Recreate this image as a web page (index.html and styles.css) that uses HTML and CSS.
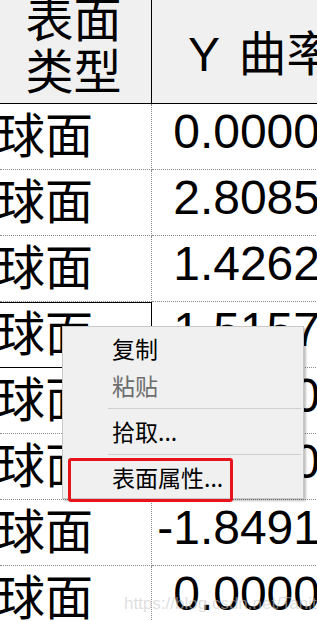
FILE: index.html
```html
<!DOCTYPE html>
<html lang="zh-CN">
<head>
  <meta charset="UTF-8">
  <title>表面数据</title>
  <link rel="stylesheet" href="styles.css">
</head>
<body>
  <div class="sheet">
    <div class="head name-head"><span>表面<br>类型</span></div>
    <div class="head val-head">Y 曲率</div>

    <div class="cell name">球面</div><div class="cell val">0.0000</div>
    <div class="cell name">球面</div><div class="cell val">2.8085</div>
    <div class="cell name">球面</div><div class="cell val">1.4262</div>
    <div class="cell name selected">球面</div><div class="cell val">1.5157</div>
    <div class="cell name">球面</div><div class="cell val">0.0000</div>
    <div class="cell name">球面</div><div class="cell val">0.0000</div>
    <div class="cell name">球面</div><div class="cell val">-1.8491</div>
    <div class="cell name">球面</div><div class="cell val">0.0000</div>
  </div>

  <!-- 右键菜单 -->
  <div class="menu">
    <div class="item">复制</div>
    <div class="item disabled">粘贴</div>
    <div class="sep"></div>
    <div class="item">拾取...</div>
    <div class="sep"></div>
    <div class="item">表面属性...</div>
  </div>
  <div class="mark"></div>

  <div class="watermark">https://blog.csdn.net/Tanit</div>
</body>
</html>
```

FILE: styles.css
```css
html, body { margin: 0; padding: 0; overflow: hidden; background: #fff; }
body { width: 317px; height: 621px; position: relative; font-family: "Noto Sans CJK SC", sans-serif; }

.sheet { display: grid; grid-template-columns: 152px 170px; grid-auto-rows: 66px; grid-template-rows: 104px; width: 322px; }

.head { background: #f0f0f0; border-bottom: 1px solid #000; display: flex; align-items: center; overflow: hidden; font-size: 48px; color: #000; white-space: nowrap; }
.name-head { border-right: 1px solid #000; justify-content: center; padding-bottom: 20px; padding-right: 4px; line-height: 52px; }
.val-head { padding-left: 36px; padding-bottom: 4px; word-spacing: 6px; font-family: "Liberation Sans", "Noto Sans CJK SC", sans-serif; }

.cell { display: flex; align-items: center; font-size: 48px; padding-bottom: 10px; border-bottom: 1px dotted #8a8a8a; overflow: hidden; white-space: nowrap; }
.name { border-right: 1px dotted #8a8a8a; padding-left: 0; text-indent: -3px; }
.val { justify-content: flex-end; padding-right: 2px; font-family: "Liberation Sans", sans-serif; }
.selected { border: 1px solid #000; border-left: 0; }

.menu { position: absolute; left: 62px; top: 326px; width: 240px; padding: 3px 0 2px; background: #f0f0f0; border: 1px solid #c8c8c8; box-shadow: 2px 2px 2px rgba(0,0,0,0.25); font-size: 23px; }
.item { height: 37px; line-height: 37px; padding-left: 49px; color: #000; }
.item.disabled { color: #6d6d6d; }
.sep { height: 1px; margin: 4px 2px 4px 45px; background: #cfcfcf; }

.mark { position: absolute; left: 68px; top: 458px; width: 159px; height: 38px; border: 3px solid #e8141b; border-radius: 3px; }

.watermark { position: absolute; left: 124px; top: 594px; font-family: "Liberation Sans", sans-serif; font-size: 17px; color: rgba(200,200,200,0.6); }
```
